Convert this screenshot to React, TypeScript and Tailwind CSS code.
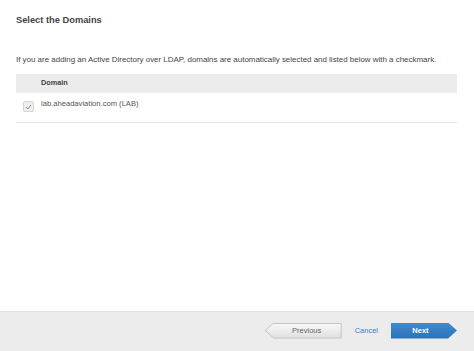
export default function App() {
  return (
    <div className="flex h-[351px] w-[474px] flex-col bg-white font-['Liberation_Sans',Arial,sans-serif] text-[#333]">
      <div className="flex-1 px-4">
        <h1 className="pt-[14px] text-[9.3px] font-semibold leading-[12px] text-[#444]">Select the Domains</h1>
        <p className="mt-[29px] text-[7.95px] leading-[9px] text-[#444]">
          If you are adding an Active Directory over LDAP, domains are automatically selected and listed below with a checkmark.
        </p>
        <div className="mt-[10px] w-[441px]">
          <div className="flex h-[19px] items-center bg-[#ececec] pl-[25px] text-[7.3px] font-bold text-[#444]">Domain</div>
          <div className="flex h-[30px] items-start border-b border-[#e4e4e4] pt-[7px]">
            <div className="ml-[7px] mt-[1px] flex h-[11px] w-[11px] items-center justify-center rounded-[2px] border border-[#d4d4d4] bg-[#eeeeee]">
              <svg width="7" height="6" viewBox="0 0 7 6" fill="none">
                <path d="M1 3.2 L2.8 5 L6 1" stroke="#8a8a8a" strokeWidth="1" />
              </svg>
            </div>
            <span className="ml-[7px] -mt-[1px] text-[7.6px] leading-[10px] text-[#555]">lab.aheadaviation.com (LAB)</span>
          </div>
        </div>
      </div>
      <div className="flex h-[40px] items-center justify-end border-t border-[#e2e2e2] bg-[#ececec] pb-[2px] pr-[17px]">
        <div className="h-[16px] w-[77px] bg-[#c4c4c4] p-px [clip-path:polygon(9px_0,100%_0,100%_100%,9px_100%,0_50%)]">
          <div className="flex h-full w-full items-center justify-center bg-gradient-to-b from-[#f8f8f8] to-[#e0e0e0] pl-[7px] text-[7.5px] text-[#666] [clip-path:polygon(8px_0,100%_0,100%_100%,8px_100%,0_50%)]">
            Previous
          </div>
        </div>
        <span className="ml-[13px] text-[7.5px] text-[#3b7fc0]">Cancel</span>
        <div className="ml-[13px] flex h-[16px] w-[66px] items-center justify-center bg-gradient-to-b from-[#3f8ad0] to-[#2a72bb] pr-[7px] text-[7.5px] font-bold text-white [clip-path:polygon(0_0,calc(100%-9px)_0,100%_50%,calc(100%-9px)_100%,0_100%)]">
          Next
        </div>
      </div>
    </div>
  );
}
